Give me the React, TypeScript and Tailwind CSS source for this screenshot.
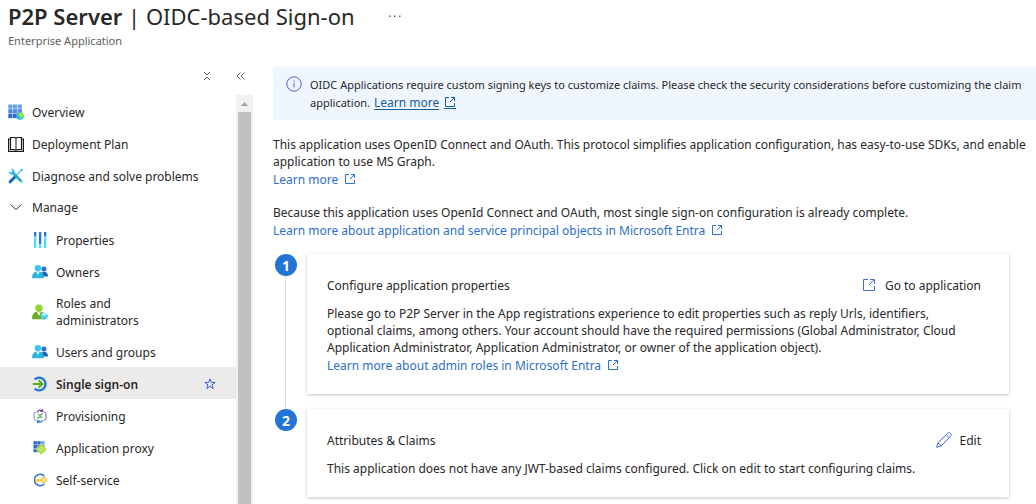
import React from "react";

function Overview() {
  return (
    <svg width="16" height="16" viewBox="0 0 16 16" aria-hidden="true">
      {[0, 1, 2].map((r) =>
        [0, 1, 2].map((c) => (
          <rect key={`${r}${c}`} x={0.3 + c * 4.7} y={0.5 + r * 4.7} width="4.200" height="4.200" fill={["#699ff2", "#4a86e4", "#2a6bd4"][r]} />
        )),
      )}
      <circle cx="12" cy="12" r="3.800" fill="#2cc4d8" />
      <path d="M11 8.600c2-.6 4 .6 4.500 2.200-.2 1.800-1 1.500-1.600 2.400-.5 1-1.500.8-1.700-.4-.2-1-1.300-1-1.600-2 0-.9.100-1.500.4-2.200Z" fill="#a4e52f" />
    </svg>
  );
}

function Book() {
  return (
    <svg width="16" height="16" viewBox="0 0 16 16" fill="none" stroke="#1b1a19" aria-hidden="true">
      <path d="M2.500 1.500h3.500c1 0 1.700.4 2 1 .3-.6 1-1 2-1h3.500v12H10c-1 0-1.700.3-2 1-.3-.7-1-1-2-1H2.500Z" strokeWidth="1.200" />
      <path d="M8 2.500v12" strokeWidth="1.500" stroke="#6b6a69" />
      <path d="M2.500 3H.6v12.300h14.800V3h-1.900" strokeWidth="1.200" />
    </svg>
  );
}

function Tools() {
  return (
    <svg width="16" height="16" viewBox="0 0 16 16" fill="none" aria-hidden="true">
      <path d="m13.800 1.500-6 6.500" stroke="#50c8ea" strokeWidth="1.300" />
      <path d="m12.600 2.100 1.900-1.100.6.6-1.100 1.900" fill="#32bedd" />
      <path d="m7.600 8.300-5.400 5.500" stroke="#1765b0" strokeWidth="3" strokeLinecap="round" />
      <path d="m4.500 4.500 9 9" stroke="#21a5dc" strokeWidth="2.600" strokeLinecap="round" />
      <path d="M2.900.9 5 3 4.600 4.700 2.900 5 .9 3.100C.5 4.900 1.800 7 4.300 6.600l2.300-2.200C6.900 2 4.800.4 2.900.9Z" fill="#32b9e8" />
      <circle cx="13.500" cy="13.500" r=".7" fill="#fff" />
    </svg>
  );
}

function Properties() {
  return (
    <svg width="16" height="16" viewBox="0 0 16 16" aria-hidden="true">
      <path d="M2 0h2.300v5H2zM12 0h2.300v5H12zM7 0h2.300v12H7z" fill="#2874d8" />
      <path d="M2 5h2.300v11H2zM12 5h2.300v11H12zM7 12.500h2.300V16H7z" fill="#50dcf5" />
      <path d="M2 4.500h2.300V6H2zM12 4.500h2.300V6H12zM7 12h2.300v1H7z" fill="#9ff0fb" />
    </svg>
  );
}

function People() {
  return (
    <svg width="16" height="16" viewBox="0 0 16 16" aria-hidden="true">
      <circle cx="12" cy="5" r="2.500" fill="#2870d4" />
      <path d="M9 12.500c0-3 1-4.800 3-4.800s3.500 1.500 4 4c0 .6-.3.800-.8.800Z" fill="#1d63c4" />
      <circle cx="6" cy="4.300" r="3.300" fill="#38c8ee" />
      <path d="M0 13.300C.3 10 1.800 7.800 4 7.800h4c2.300 0 3.700 2.300 3.900 5.500 0 .7-.4 1-1 1H1c-.6 0-1-.3-1-1Z" fill="#2bb5dc" />
      <path d="m4.400 7.700 1.600 3.500 1.600-3.500Z" fill="#e8fbff" />
    </svg>
  );
}

function Roles() {
  return (
    <svg width="16" height="16" viewBox="0 0 16 16" aria-hidden="true">
      <circle cx="7" cy="4.300" r="3.700" fill="#94d42e" />
      <path d="M0 14c.3-3.500 2-6 4.300-6h5c2.400 0 4 2.500 4.200 6 0 .7-.4 1.300-1.200 1.300H1.200C.4 15.300 0 14.800 0 14Z" fill="#68ad22" />
      <path d="m5 8 1.900 4L8.800 8Z" fill="#fff" />
      <path d="m12.300 8.500 3.500 1.800v3.700l-3.500 1.800L8.900 14v-3.700Z" fill="#55d5f5" />
      <path d="m8.900 10.300 3.400 1.800 3.500-1.800-3.500-1.800Z" fill="#a5effd" />
      <path d="M12.300 12.100v3.700" stroke="#32b0d8" strokeWidth=".6" />
    </svg>
  );
}

function SignOn() {
  return (
    <svg width="16" height="16" viewBox="0 0 16 16" fill="none" aria-hidden="true">
      <path d="M2.600 3.500A6.400 6.400 0 1 1 2.600 12.500" stroke="#2374d5" strokeWidth="2.300" />
      <path d="M.8 8H10M6.600 4.200 10.400 8l-3.800 3.800" stroke="#58ad18" strokeWidth="2.100" />
    </svg>
  );
}

function Provisioning() {
  return (
    <svg width="16" height="16" viewBox="0 0 16 16" fill="none" strokeWidth="1" aria-hidden="true">
      <path d="M4.500 4H4C2.500 4 2 5 2 6v4c0 1.500.8 2.300 2 2.300h.5" stroke="#5b8fd4" />
      <path d="M11.500 4h.5c1.500 0 2 1 2 2v4c0 1.500-.8 2.300-2 2.300h-.5" stroke="#8b4eb0" />
      <path d="M5.600 4.500A2.500 2.500 0 0 1 10 3M10.500 1.200V3.400H8.400" stroke="#703a91" strokeWidth="1.200" />
      <path d="M10.400 5A2.500 2.500 0 0 1 6 6.300" stroke="#4aa53b" strokeWidth="1.200" />
      <path d="M5.600 11.200A2.500 2.500 0 0 1 10 9.900" stroke="#4aa53b" strokeWidth="1.200" />
      <path d="M10.400 12A2.500 2.500 0 0 1 6 13.300M5.500 15v-2.100h2.100" stroke="#2478d4" strokeWidth="1.200" />
    </svg>
  );
}

function Proxy() {
  return (
    <svg width="16" height="16" viewBox="0 0 16 16" aria-hidden="true">
      {[0, 1, 2].map((r) =>
        [0, 1, 2].map((c) => (
          <rect key={`${r}${c}`} x={1.5 + c * 3.8} y={1.2 + r * 3.8} width="3.400" height="3.400" fill={r === 0 && c === 2 ? "#6fa5ea" : "#2769c6"} />
        )),
      )}
      <path d="m9.300 3.600 5.600 5.600-5.600 5.600-5.600-5.600Z" fill="#a9d533" stroke="#fff" strokeWidth=".4" />
      <path d="M9.300 6.700 11.800 9.200l-2.500 2.500-2.500-2.500Z" fill="none" stroke="#e7f6bd" strokeWidth=".7" />
      <path d="M9.300 6v6.400M6.100 9.200h6.400" stroke="#d3ec85" strokeWidth=".6" />
    </svg>
  );
}

function SelfService() {
  return (
    <svg width="16" height="16" viewBox="0 0 16 16" fill="none" aria-hidden="true">
      <path d="M12.400 4.200A5.700 5.700 0 1 0 12.400 11.800" stroke="#2b72cf" strokeWidth="1.500" />
      <circle cx="11.800" cy="8" r="2.200" stroke="#fcc624" strokeWidth="1.600" />
      <path d="M9.600 8H4v2M6.200 8v2" stroke="#fcc624" strokeWidth="1.600" />
    </svg>
  );
}

function ExternalIcon({ size = 10 }: { size?: number }) {
  return (
    <svg width={size} height={size} viewBox={`0 0 ${size} ${size}`} fill="none" stroke="currentColor" strokeWidth="1" className="block shrink-0" aria-hidden="true">
      {size === 10 ? (
        <path d="M4 .5H.5v9h9V6M6 .5h3.500V4M9.500.5l-4.500 4.500" />
      ) : (
        <path d="M5 .5H.5v11h11V7M7 .5h4.500V5M11.500.5 6 6" />
      )}
    </svg>
  );
}

function TextLink({ children }: { children: React.ReactNode }) {
  return (
    <a href="#" className="flex h-[18px] w-fit items-center gap-[7px] whitespace-nowrap text-[#2b6fce]">
      {children}
      <ExternalIcon />
    </a>
  );
}

const topItems = [
  { label: "Overview", icon: <Overview /> },
  { label: "Deployment Plan", icon: <Book /> },
  { label: "Diagnose and solve problems", icon: <Tools /> },
];

const manageItems = [
  { label: "Properties", icon: <Properties /> },
  { label: "Owners", icon: <People /> },
  { label: "Roles and administrators", icon: <Roles />, tall: true },
  { label: "Users and groups", icon: <People /> },
  { label: "Single sign-on", icon: <SignOn />, active: true },
  { label: "Provisioning", icon: <Provisioning /> },
  { label: "Application proxy", icon: <Proxy /> },
  { label: "Self-service", icon: <SelfService /> },
];

function Sidebar() {
  return (
    <aside className="flex w-[253px] shrink-0 flex-col">
      <div className="flex h-7 shrink-0 items-start justify-end gap-[22px] pr-[6px] pt-[3px] text-[#605e5c]">
        <button aria-label="Collapse groups">
          <svg width="12" height="12" viewBox="0 0 12 12" fill="none" stroke="currentColor">
            <path d="m3 2 3 2.800L9 2M3 10l3-2.800L9 10" />
          </svg>
        </button>
        <button aria-label="Collapse menu">
          <svg width="12" height="12" viewBox="0 0 12 12" fill="none" stroke="currentColor">
            <path d="M5.500 2.500 2 6l3.500 3.500M9.500 2.500 6 6l3.500 3.500" />
          </svg>
        </button>
      </div>
      <div className="flex min-h-0 flex-1">
        <nav className="min-w-0 flex-1 overflow-hidden">
          {topItems.map((item) => (
            <a key={item.label} href="#" className="flex h-8 items-center gap-2 pl-2 pt-0.5">
              {item.icon}
              {item.label}
            </a>
          ))}
          <button className="flex h-8 w-full items-center gap-2 pl-2" aria-expanded="true">
            <svg width="16" height="16" viewBox="0 0 16 16" fill="none" stroke="#323130" aria-hidden="true">
              <path d="m2.500 5.500 5.500 5 5.500-5" />
            </svg>
            Manage
          </button>
          {manageItems.map((item) => (
            <a
              key={item.label}
              href="#"
              aria-current={item.active ? "page" : undefined}
              className={`flex items-center gap-2 pl-8 pr-5 pt-0.5 ${item.tall ? "h-12" : "h-8"} ${item.active ? "bg-[#edebe9] font-semibold" : ""}`}
            >
              <span className="shrink-0">{item.icon}</span>
              <span className={item.tall ? "w-24" : "flex-1"}>{item.label}</span>
              {item.active && (
                <svg width="12" height="12" viewBox="0 0 12 12" fill="none" stroke="#3b5bdb" className="shrink-0" aria-hidden="true">
                  <path d="m6 .9 1.300 3.500 3.800.1-3 2.300 1.100 3.700L6 8.300l-3.200 2.200 1.100-3.700-3-2.300 3.800-.1Z" />
                </svg>
              )}
            </a>
          ))}
        </nav>
        <div className="flex w-[17px] flex-col items-center bg-[#f1f1f1]" aria-hidden="true">
          <svg width="17" height="17" viewBox="0 0 17 17">
            <path d="m5 11 3.500-4 3.500 4Z" fill="#a3a3a3" />
          </svg>
          <div className="w-[13px] flex-1 bg-[#c1c1c1]" />
        </div>
      </div>
    </aside>
  );
}

function Step({ n, title, action, last, children }: { n: number; title: string; action: React.ReactNode; last?: boolean; children: React.ReactNode }) {
  return (
    <li className="flex">
      <div className="flex w-[34px] shrink-0 flex-col items-start pl-[2px]">
        <span className="flex size-[22px] items-center justify-center rounded-full bg-[#2374d5] text-[14px] font-bold text-white">{n}</span>
        {!last && <span className="ml-[10px] w-px flex-1 bg-[#dcdcdc]" />}
      </div>
      <div className={`min-w-0 flex-1 ${last ? "" : "pb-[15px]"}`}>
        <section className="bg-white px-5 pb-5 pt-[19px] shadow-[0_1px_3px_rgba(0,0,0,0.24)]">
          <div className="flex h-6 items-center justify-between pr-2">
            <h2>{title}</h2>
            {action}
          </div>
          <div className="pt-2">{children}</div>
        </section>
      </div>
    </li>
  );
}

export default function App() {
  return (
    <div className="flex h-screen flex-col overflow-hidden bg-white font-['Noto_Sans','Open_Sans',sans-serif] text-[12px] leading-[17px] text-[#292827]">
      <header className="h-[67px] shrink-0 pl-2 pt-[2px]">
        <div className="flex items-center gap-[34px]">
          <h1 className="whitespace-nowrap text-[22px] leading-7">
            <span className="font-semibold">P2P Server</span> | OIDC-based Sign-on
          </h1>
          <button aria-label="More actions" className="text-[#605e5c]">
            <svg width="12" height="4" viewBox="0 0 12 4" fill="currentColor">
              <path d="M0 1.500h1.500V3H0zM5 1.500h1.500V3H5zM10 1.500h1.500V3H10z" />
            </svg>
          </button>
        </div>
        <p className="pt-[2px] text-[11px] text-[#605e5c]">Enterprise Application</p>
      </header>
      <div className="flex min-h-0 flex-1">
        <Sidebar />
        <main className="min-w-0 flex-1 overflow-hidden pl-5">
          <div className="flex h-[53px] gap-2 overflow-hidden bg-[#eff6ff] pl-[13px] pt-[9px] text-[11px] leading-[18px]">
            <svg width="16" height="16" viewBox="0 0 16 16" fill="none" stroke="#5558d9" className="shrink-0" aria-hidden="true">
              <circle cx="8" cy="8" r="7.200" />
              <path d="M8 7v4.500M8 4.500V6" />
            </svg>
            <div className="whitespace-nowrap">
              <p>OIDC Applications require custom signing keys to customize claims. Please check the security considerations before customizing the claim</p>
              <p className="flex gap-1">
                application.
                <a href="#" className="flex items-center gap-[5px] text-[12px] text-[#115ea3]">
                  <span className="underline underline-offset-2">Learn more</span>
                  <span className="border-b border-current px-px pb-px">
                    <ExternalIcon />
                  </span>
                </a>
              </p>
            </div>
          </div>
          <div className="pt-4">
            <p className="whitespace-nowrap">
              This application uses OpenID Connect and OAuth. This protocol simplifies application configuration, has easy-to-use SDKs, and enable
              <br />
              application to use MS Graph.
            </p>
            <TextLink>Learn more</TextLink>
          </div>
          <div className="pt-4">
            <p>Because this application uses OpenId Connect and OAuth, most single sign-on configuration is already complete.</p>
            <TextLink>Learn more about application and service principal objects in Microsoft Entra</TextLink>
          </div>
          <ol className="pr-[27px] pt-[15px]">
            <Step
              n={1}
              title="Configure application properties"
              action={
                <button className="flex items-center gap-[10px]">
                  <span className="text-[#3b6fd0]">
                    <ExternalIcon size={12} />
                  </span>
                  Go to application
                </button>
              }
            >
              <p>
                Please go to P2P Server in the App registrations experience to edit properties such as reply Urls, identifiers,
                <br />
                optional claims, among others. Your account should have the required permissions (Global Administrator, Cloud
                <br />
                Application Administrator, Application Administrator, or owner of the application object).
              </p>
              <TextLink>Learn more about admin roles in Microsoft Entra</TextLink>
            </Step>
            <Step
              n={2}
              last
              title="Attributes & Claims"
              action={
                <button className="flex items-center gap-2">
                  <svg width="16" height="16" viewBox="0 0 16 16" fill="none" stroke="#3b6fd0" aria-hidden="true">
                    <path d="M.7 15.300 2 10.800 11.700 1.200c1.900-1.600 4.600 1 3 3L5.200 13.900Z M2 10.800l3.200 3.100M10.200 2.700l3.100 3.100" />
                  </svg>
                  Edit
                </button>
              }
            >
              <p>This application does not have any JWT-based claims configured. Click on edit to start configuring claims.</p>
            </Step>
          </ol>
        </main>
      </div>
    </div>
  );
}
